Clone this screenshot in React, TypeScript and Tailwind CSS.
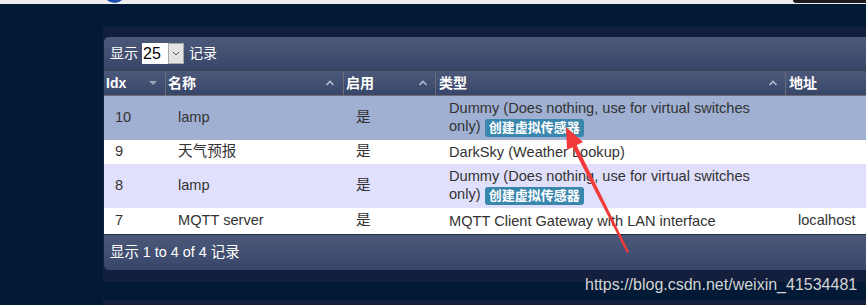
import React from 'react'

const font = { fontFamily: '"Liberation Sans", Arial, "Noto Sans CJK SC", sans-serif' }

function Badge() {
  return (
    <span className="inline-block ml-[4px] px-[4px] rounded-[3px] bg-[#3a87ad] text-white font-bold text-[13px] leading-[18px] align-middle">
      创建虚拟传感器
    </span>
  )
}

function SortDown() {
  return (
    <svg width="10" height="6" viewBox="0 0 10 6" className="shrink-0">
      <path d="M1 1 L9 1 L5 5 Z" fill="#9aa3b8" />
    </svg>
  )
}

function SortUp() {
  return (
    <svg width="10" height="6" viewBox="0 0 10 6" className="shrink-0">
      <path d="M1.5 5 L5 1.5 L8.5 5" fill="none" stroke="#b4bccd" strokeWidth="1.6" />
    </svg>
  )
}

const rows = [
  { idx: '10', name: 'lamp', on: '是', dummy: true, addr: '', bg: 'bg-[#9fb0d2]', h: 'h-[44px]' },
  { idx: '9', name: '天气预报', on: '是', type: 'DarkSky (Weather Lookup)', addr: '', bg: 'bg-white', h: 'h-[24px]' },
  { idx: '8', name: 'lamp', on: '是', dummy: true, addr: '', bg: 'bg-[#e0e0fc]', h: 'h-[44px]' },
  { idx: '7', name: 'MQTT server', on: '是', type: 'MQTT Client Gateway with LAN interface', addr: 'localhost', bg: 'bg-white', h: 'h-[26px]' },
]

const gradient = 'bg-gradient-to-b from-[#4b5879] via-[#435072] to-[#37456a]'

export default function App() {
  return (
    <div className="relative w-[866px] h-[305px] overflow-hidden bg-[#031a36]" style={font}>
      {/* top browser strip */}
      <div className="relative h-[4px] bg-[#efefef]">
        <div className="absolute left-[103px] top-[-20px] w-[23px] h-[23px] rounded-full bg-[#1e4fb0]" />
        <div className="absolute left-[793px] top-0 right-0 h-[3px] rounded-bl-[3px] bg-[#1c1c1c]" />
      </div>

      <div className="ml-[103px] mt-[23px] pt-[10px] pb-[12px] bg-[#141f3d]">
        <div className="ml-[1px] rounded-tl-[5px] rounded-bl-[5px] overflow-hidden">
          {/* toolbar */}
          <div className={`h-[34px] flex items-center pl-[6px] text-white text-[14px] border-b border-[#3a3f4e] ${gradient}`}>
            <span>显示</span>
            <div className="ml-[4px] flex h-[21px] items-stretch">
              <span className="w-[26px] bg-white text-black text-[16px] leading-[21px] pl-[1px]">25</span>
              <span className="w-[16px] bg-[#e3e3e3] border border-[#a9a9a9] flex items-center justify-center">
                <svg width="8" height="5" viewBox="0 0 8 5">
                  <path d="M1 1 L4 4 L7 1" fill="none" stroke="#555" strokeWidth="1" />
                </svg>
              </span>
            </div>
            <span className="ml-[5px]">记录</span>
          </div>

          {/* header */}
          <div className={`flex h-[25px] text-white font-bold text-[14px] border-b border-[#6c6c72] ${gradient}`}>
            <div className="w-[62px] flex items-center justify-between pl-[2px] pr-[7px] border-r border-[#6a6d78]">
              <span>Idx</span>
              <SortDown />
            </div>
            <div className="w-[178px] flex items-center justify-between pl-[2px] pr-[8px] border-r border-[#6a6d78]">
              <span>名称</span>
              <SortUp />
            </div>
            <div className="w-[92px] flex items-center justify-between pl-[2px] pr-[7px] border-r border-[#6a6d78]">
              <span>启用</span>
              <SortUp />
            </div>
            <div className="w-[350px] flex items-center justify-between pl-[3px] pr-[7px] border-r border-[#6a6d78]">
              <span>类型</span>
              <SortUp />
            </div>
            <div className="flex-1 flex items-center pl-[3px]">
              <span>地址</span>
            </div>
          </div>

          {/* rows */}
          {rows.map((r) => (
            <div key={r.idx} className={`flex items-center text-[14.6px] text-[#333] ${r.bg} ${r.h}`}>
              <div className="w-[62px] pl-[11px]">{r.idx}</div>
              <div className="w-[178px] pl-[12px]">{r.name}</div>
              <div className="w-[92px] pl-[12px]">{r.on}</div>
              <div className="w-[350px] pl-[13px] leading-[18px]">
                {r.dummy ? (
                  <>
                    Dummy (Does nothing, use for virtual switches
                    <br />
                    only)
                    <Badge />
                  </>
                ) : (
                  r.type
                )}
              </div>
              <div className="flex-1 pl-[12px]">{r.addr}</div>
            </div>
          ))}

          {/* footer */}
          <div className={`h-[36px] flex items-center pl-[6px] text-white text-[14.4px] border-t border-[#2a2f3e] ${gradient}`}>
            显示 1 to 4 of 4 记录
          </div>
        </div>
      </div>

      <div className="ml-[103px] mt-[18px] h-[10px] bg-[#141f3d]" />

      {/* watermark */}
      <div className="absolute left-[585px] top-[273px] text-[16px] text-[#d4d4d4]">
        https://blog.csdn.net/weixin_41534481
      </div>

      {/* red annotation arrow */}
      <svg className="absolute left-0 top-0 pointer-events-none" width="866" height="305">
        <polygon points="627,253 629,252 575.5,143 571.5,145" fill="#f23a3a" />
        <polygon points="566,127 583,142 567,150" fill="#f23a3a" />
      </svg>
    </div>
  )
}
